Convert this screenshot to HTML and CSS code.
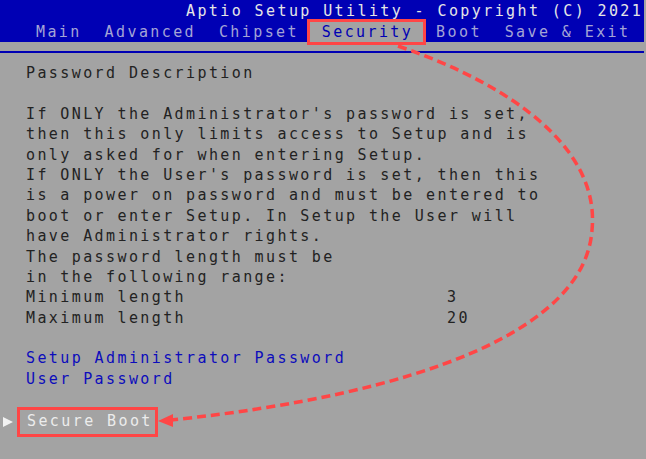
FILE: index.html
```html
<!DOCTYPE html>
<html>
<head>
<meta charset="utf-8">
<link rel="stylesheet" href="styles.css">
</head>
<body>
<div class="screen">
  <header class="topbar">
    <div class="title">Aptio Setup Utility - Copyright (C) 2021</div>
    <nav class="menu">
      <span class="tab">Main</span>
      <span class="tab">Advanced</span>
      <span class="tab">Chipset</span>
      <span class="tab active">Security</span>
      <span class="tab">Boot</span>
      <span class="tab">Save &amp; Exit</span>
    </nav>
  </header>
  <div class="rule"></div>
  <main class="content">
    <div class="line">Password Description</div>
    <div class="line blank"></div>
    <div class="line">If ONLY the Administrator's password is set,</div>
    <div class="line">then this only limits access to Setup and is</div>
    <div class="line">only asked for when entering Setup.</div>
    <div class="line">If ONLY the User's password is set, then this</div>
    <div class="line">is a power on password and must be entered to</div>
    <div class="line">boot or enter Setup. In Setup the User will</div>
    <div class="line">have Administrator rights.</div>
    <div class="line">The password length must be</div>
    <div class="line">in the following range:</div>
    <div class="line kv"><span>Minimum length</span><span>3</span></div>
    <div class="line kv"><span>Maximum length</span><span>20</span></div>
    <div class="line blank"></div>
    <div class="line link">Setup Administrator Password</div>
    <div class="line link">User Password</div>
    <div class="line blank"></div>
    <div class="line selrow"><span class="marker"></span><span class="selected">Secure Boot</span></div>
  </main>
  <svg class="annot" width="646" height="459" viewBox="0 0 646 459">
    <path d="M 398 46 C 515 86, 600 150, 592 230 C 585 330, 420 394, 171 420" fill="none" stroke="#ff4646" stroke-width="3.5" stroke-dasharray="9 5"/>
    <polygon points="158,421 173,414 173,427" fill="#ff4646"/>
  </svg>
</div>
</body>
</html>
```

FILE: styles.css
```css
html, body {
  margin: 0;
  padding: 0;
  background: #a3a3a3;
}
.screen {
  position: relative;
  width: 646px;
  height: 459px;
  overflow: hidden;
  background: #a3a3a3;
  font-family: "DejaVu Sans Mono", "Liberation Mono", monospace;
  font-size: 15px;
  letter-spacing: 2.4px;
}
.topbar {
  width: 644px;
  height: 42px;
  box-sizing: border-box;
  padding-top: 1px;
  background: #0000b4;
}
.title {
  height: 21px;
  line-height: 21px;
  padding-left: 186px;
  color: #e6e6e6;
  white-space: pre;
}
.menu {
  display: flex;
  height: 20px;
  padding-left: 36px;
}
.tab {
  display: flex;
  align-items: center;
  margin-right: 22.86px;
  color: #a4a4d6;
  white-space: pre;
}
.tab.active {
  background: #a3a3a3;
  color: #0000b4;
  padding: 0 10px 0 12px;
  margin-left: -12px;
  margin-right: 12.86px;
  outline: 3px solid #ff4646;
}
.rule {
  width: 644px;
  height: 2px;
  margin-top: 9px;
  background: #0000b4;
}
.content {
  padding: 10px 0 0 26px;
  color: #222222;
}
.line {
  height: 20.4px;
  line-height: 20.4px;
  white-space: pre;
}
.kv {
  display: grid;
  grid-template-columns: 421px auto;
}
.link {
  color: #0c0cbc;
}
.selrow {
  display: flex;
  align-items: center;
  margin-left: -23px;
  margin-top: 2px;
}
.marker {
  width: 0;
  height: 0;
  border-top: 5px solid transparent;
  border-bottom: 5px solid transparent;
  border-left: 10px solid #f2f2f2;
}
.selected {
  margin-left: 7px;
  padding: 1px 2px 3px 7px;
  color: #ececec;
  outline: 3px solid #ff4646;
}
.annot {
  position: absolute;
  left: 0;
  top: 0;
  pointer-events: none;
}
```
